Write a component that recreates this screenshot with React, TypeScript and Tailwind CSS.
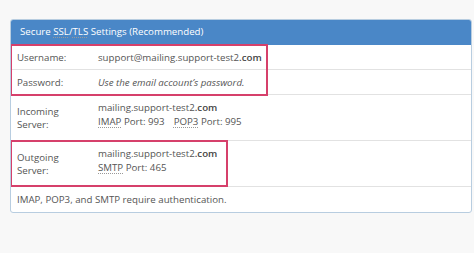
import { ReactNode } from 'react';

// Abbreviation with a dotted underline, like the cPanel help text
function Abbr({ children }: { children: ReactNode }) {
  return <span className="underline decoration-dotted decoration-[#999] underline-offset-2">{children}</span>;
}

function Row({ label, children, tall = false }: { label: ReactNode; children: ReactNode; tall?: boolean }) {
  return (
    <div className={`flex border-b border-[#e2e2e2] ${tall ? 'h-[46px]' : 'h-[25px]'}`}>
      <div className={`w-[87px] shrink-0 pl-[6px] leading-[13px] ${tall ? 'pt-[10px]' : 'pt-[6px]'}`}>{label}</div>
      <div className="flex-1 leading-[13px] pt-[6px]">{children}</div>
    </div>
  );
}

export default function App() {
  return (
    <div className="w-[474px] h-[253px] bg-[#f8f8f8] pt-[19px] pl-[10px] pr-[2px] text-[9.7px] text-[#555]" style={{ fontFamily: '"Open Sans", "Liberation Sans", sans-serif' }}>
      <div className="bg-white rounded-[3px] border border-[#b8cde0] overflow-hidden">
        <div className="h-[26px] bg-[#4a87c7] text-white pl-[10px] flex items-center -mx-px -mt-px">
          <span>
            Secure <Abbr>SSL</Abbr>/<Abbr>TLS</Abbr> Settings (Recommended)
          </span>
        </div>

        {/* Highlighted credentials */}
        <div className="relative">
          <Row label="Username:">
            support@mailing.support-test2<span className="font-semibold text-[#444]">.com</span>
          </Row>
          <Row label="Password:">
            <span className="italic">Use the email account’s password.</span>
          </Row>
          <div className="absolute -left-px -top-px w-[258px] h-[52px] border-2 border-[#d6406b] pointer-events-none" />
        </div>

        <Row tall label={<>Incoming<br />Server:</>}>
          <div>mailing.support-test2<span className="font-semibold text-[#444]">.com</span></div>
          <div className="mt-px">
            <Abbr>IMAP</Abbr> Port: 993<span className="inline-block w-[9px]" /><Abbr>POP3</Abbr> Port: 995
          </div>
        </Row>

        <div className="relative">
          <Row tall label={<>Outgoing<br />Server:</>}>
            <div>mailing.support-test2<span className="font-semibold text-[#444]">.com</span></div>
            <div className="mt-px">
              <Abbr>SMTP</Abbr> Port: 465
            </div>
          </Row>
          <div className="absolute -left-px -top-px w-[218px] h-[47px] border-2 border-[#d6406b] pointer-events-none" />
        </div>

        <div className="h-[25px] pl-[6px] pt-[6px] leading-[13px]">IMAP, POP3, and SMTP require authentication.</div>
      </div>
    </div>
  );
}
